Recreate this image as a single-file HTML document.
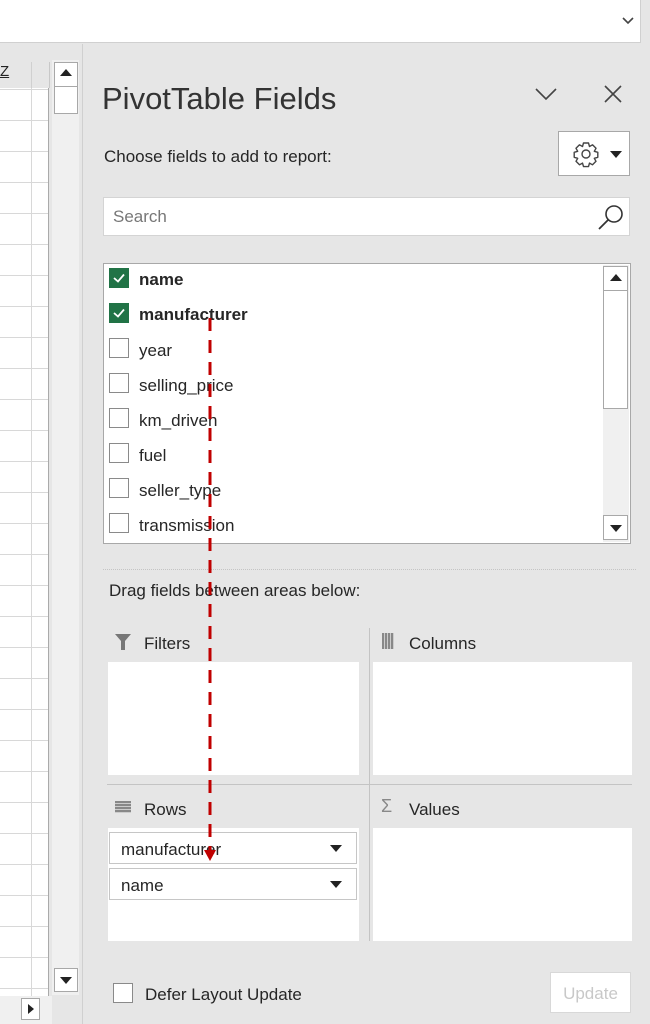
<!DOCTYPE html>
<html><head><meta charset="utf-8"><style>
*{margin:0;padding:0;box-sizing:border-box}
body{width:650px;height:1024px;overflow:hidden;background:#e6e6e6;font-family:"Liberation Sans",sans-serif;color:#262626;position:relative}
.a{position:absolute}
.cb{position:absolute;width:20px;height:20px;border:1px solid #8a8a8a;background:#fff}
.cb.on{background:#217346;border-color:#217346}
.fl{position:absolute;left:139px;font-size:17px;color:#262626}
.dd{position:absolute;left:109px;width:248px;height:32px;border:1px solid #c6c6c6;background:#fff;font-size:17px;padding:7px 0 0 11px}
.tri{position:absolute;width:0;height:0;border-left:6px solid transparent;border-right:6px solid transparent;border-top:7px solid #222}
.triu{position:absolute;width:0;height:0;border-left:6px solid transparent;border-right:6px solid transparent;border-bottom:7px solid #222}
.btn{position:absolute;background:#fff;border:1px solid #a8a8a8}
</style></head><body>
<div class="a" style="left:0;top:0;width:641px;height:43px;background:#fff;border:1px solid #d0d0d0;border-left:none;border-top:none"></div>
<svg class="a" style="left:622px;top:17px" width="12" height="8"><path d="M1 1 L6 6 L11 1" stroke="#444" stroke-width="1.6" fill="none"/></svg>
<div class="a" style="left:0;top:44px;width:82px;height:980px;background:#e6e6e6"></div>
<div class="a" style="left:0;top:62px;width:50px;height:26px;background:#e6e6e6;border-right:1px solid #c8c8c8"></div>
<div class="a" style="left:0;top:63px;font-size:15px;color:#222;text-decoration:underline">Z</div>
<div class="a" style="left:31px;top:62px;width:1px;height:26px;background:#d0d0d0"></div>
<div class="a" style="left:0;top:88px;width:49px;height:912px;background:#fff;border-right:1px solid #aaa;
background-image:linear-gradient(#d8d8d8 1px,transparent 1px);background-size:100% 31px;background-position:0 32px"></div>
<div class="a" style="left:31px;top:88px;width:1px;height:912px;background:#d8d8d8"></div>
<div class="a" style="left:52px;top:60px;width:27px;height:935px;background:#f0f0f0"></div>
<div class="btn" style="left:54px;top:62px;width:24px;height:25px"></div>
<div class="triu" style="left:60px;top:69px"></div>
<div class="btn" style="left:54px;top:86px;width:24px;height:28px"></div>
<div class="btn" style="left:54px;top:968px;width:24px;height:24px"></div>
<div class="tri" style="left:60px;top:977px"></div>
<div class="a" style="left:0;top:996px;width:52px;height:28px;background:#f0f0f0"></div>
<div class="btn" style="left:21px;top:998px;width:19px;height:22px"></div>
<div class="a" style="left:28px;top:1004px;width:0;height:0;border-top:5px solid transparent;border-bottom:5px solid transparent;border-left:6px solid #222"></div>
<div class="a" style="left:82px;top:44px;width:1px;height:980px;background:#d0d0d0"></div>
<div class="a" style="left:102px;top:81px;font-size:31px;color:#333">PivotTable Fields</div>
<svg class="a" style="left:535px;top:87px" width="22" height="14"><path d="M1 2 L11 12 L21 2" stroke="#444" stroke-width="1.6" fill="none"/></svg>
<svg class="a" style="left:604px;top:85px" width="18" height="18"><path d="M1 1 L17 17 M17 1 L1 17" stroke="#444" stroke-width="1.6" fill="none"/></svg>
<div class="a" style="left:104px;top:147px;font-size:17px;color:#262626">Choose fields to add to report:</div>
<div class="btn" style="left:558px;top:131px;width:72px;height:45px"></div>
<svg class="a" style="left:571px;top:140px" width="30" height="28" viewBox="0 0 30 28"><path d="M12.5 3h5l1 3.5 3-1.7 3.5 3.5-1.7 3 3.5 1v5l-3.5 1 1.7 3-3.5 3.5-3-1.7-1 3.5h-5l-1-3.5-3 1.7-3.5-3.5 1.7-3-3.5-1v-5l3.5-1-1.7-3 3.5-3.5 3 1.7z" fill="none" stroke="#444" stroke-width="1.4" stroke-linejoin="round"/><circle cx="15" cy="14" r="4" fill="none" stroke="#444" stroke-width="1.4"/></svg>
<div class="tri" style="left:610px;top:151px"></div>
<div class="a" style="left:103px;top:197px;width:527px;height:39px;background:#fff;border:1px solid #d4d4d4"></div>
<div class="a" style="left:113px;top:207px;font-size:17px;color:#777">Search</div>
<svg class="a" style="left:597px;top:203px" width="28" height="28"><circle cx="17" cy="11" r="8" fill="none" stroke="#333" stroke-width="1.6"/><path d="M11 17 L2 26" stroke="#333" stroke-width="1.8"/></svg>
<div class="a" style="left:103px;top:263px;width:528px;height:281px;background:#fff;border:1px solid #a8a8a8"></div>
<div class="a" style="left:603px;top:265px;width:26px;height:277px;background:#f0f0f0"></div>
<div class="btn" style="left:603px;top:266px;width:25px;height:25px"></div>
<div class="triu" style="left:610px;top:274px"></div>
<div class="btn" style="left:603px;top:290px;width:25px;height:119px"></div>
<div class="btn" style="left:603px;top:515px;width:25px;height:25px"></div>
<div class="tri" style="left:610px;top:525px"></div>

<div class="cb on" style="left:109px;top:268px"></div>
<svg class="a" style="left:112px;top:272px" width="14" height="12"><path d="M2 6 L6 9.5 L12 2.5" stroke="#fff" stroke-width="1.8" fill="none"/></svg>
<div class="fl" style="top:270px;font-weight:bold">name</div>
<div class="cb on" style="left:109px;top:303px"></div>
<svg class="a" style="left:112px;top:307px" width="14" height="12"><path d="M2 6 L6 9.5 L12 2.5" stroke="#fff" stroke-width="1.8" fill="none"/></svg>
<div class="fl" style="top:305px;font-weight:bold">manufacturer</div>
<div class="cb" style="left:109px;top:338px"></div><div class="fl" style="top:341px">year</div>
<div class="cb" style="left:109px;top:373px"></div><div class="fl" style="top:376px">selling_price</div>
<div class="cb" style="left:109px;top:408px"></div><div class="fl" style="top:411px">km_driven</div>
<div class="cb" style="left:109px;top:443px"></div><div class="fl" style="top:446px">fuel</div>
<div class="cb" style="left:109px;top:478px"></div><div class="fl" style="top:481px">seller_type</div>
<div class="cb" style="left:109px;top:513px"></div><div class="fl" style="top:516px">transmission</div>

<div class="a" style="left:103px;top:569px;width:533px;border-top:1px dotted #c4c4c4"></div>
<div class="a" style="left:109px;top:581px;font-size:17px">Drag fields between areas below:</div>
<div class="a" style="left:369px;top:628px;width:1px;height:313px;background:#c4c4c4"></div>
<div class="a" style="left:107px;top:784px;width:525px;height:1px;background:#c4c4c4"></div>
<svg class="a" style="left:114px;top:633px" width="18" height="18"><path d="M1 1 H17 L11 8 V17 H7 V8 Z" fill="#777"/></svg>
<div class="a" style="left:144px;top:634px;font-size:17px">Filters</div>
<div class="a" style="left:108px;top:662px;width:251px;height:113px;background:#fff"></div>
<div class="a" style="left:382px;top:633px;width:12px;height:16px;background:repeating-linear-gradient(90deg,#888 0 2px,#ccc 2px 3px)"></div>
<div class="a" style="left:409px;top:634px;font-size:17px">Columns</div>
<div class="a" style="left:373px;top:662px;width:259px;height:113px;background:#fff"></div>
<div class="a" style="left:115px;top:801px;width:16px;height:12px;background:repeating-linear-gradient(#888 0 2px,#ccc 2px 3px)"></div>
<div class="a" style="left:144px;top:800px;font-size:17px">Rows</div>
<div class="a" style="left:108px;top:828px;width:251px;height:113px;background:#fff"></div>
<div class="a" style="left:381px;top:796px;font-size:18px;color:#888">Σ</div>
<div class="a" style="left:409px;top:800px;font-size:17px">Values</div>
<div class="a" style="left:373px;top:828px;width:259px;height:113px;background:#fff"></div>
<div class="dd" style="top:832px">manufacturer</div>
<div class="tri" style="left:330px;top:845px"></div>
<div class="dd" style="top:868px">name</div>
<div class="tri" style="left:330px;top:881px"></div>
<div class="cb" style="left:113px;top:983px"></div>
<div class="a" style="left:145px;top:985px;font-size:17px">Defer Layout Update</div>
<div class="a" style="left:550px;top:972px;width:81px;height:41px;background:#fff;border:1px solid #d8d8d8;color:#c8c8c8;font-size:17px;text-align:center;padding-top:11px">Update</div>
<svg class="a" style="left:200px;top:312px" width="20" height="552"><line x1="10" y1="6" x2="10" y2="538" stroke="#c00000" stroke-width="3" stroke-dasharray="13 9"/><path d="M4 538 L16 538 L10 549 Z" fill="#c00000"/></svg>
</body></html>
